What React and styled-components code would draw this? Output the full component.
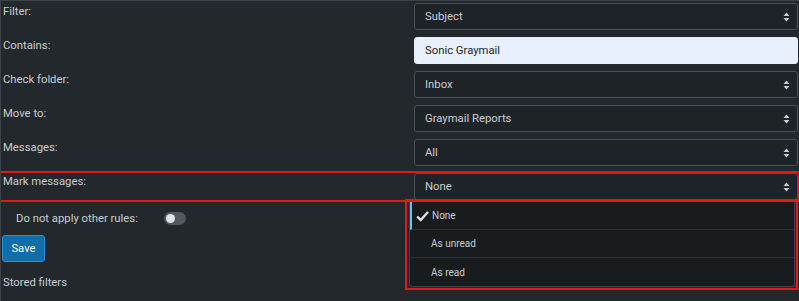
import React from "react";
import styled, { createGlobalStyle } from "styled-components";

const GlobalStyle = createGlobalStyle`
  body {
    margin: 0;
    background: #22282c;
    font-family: Roboto, "Liberation Sans", sans-serif;
    font-size: 11px;
    color: #c9cdd1;
  }
`;

const Panel = styled.div`
  position: relative;
  width: 799px;
  height: 301px;
  box-sizing: border-box;
  border-top: 1px solid #3b4248;
  border-left: 1px solid #3b4248;
  padding-top: 2px;
  overflow: hidden;
`;

const Row = styled.div`
  position: relative;
  display: grid;
  grid-template-columns: 411px 1fr;
  height: 27px;
  margin: 0 1px 7px 0;
  padding-left: 2px;
  ${({ $marked }) =>
    $marked &&
    `
    outline: 2px solid #e0191e;
    outline-offset: 0;
  `}
`;

const Label = styled.label`
  padding-top: 1px;
  font-size: 11.3px;
  line-height: 15px;
  color: #c9cdd1;
`;

const Field = styled.div`
  display: flex;
  align-items: center;
  justify-content: space-between;
  box-sizing: border-box;
  height: 27px;
  padding: 0 7px 0 10px;
  border: 1px solid ${({ $light }) => ($light ? "#e8f0fe" : "#495056")};
  border-radius: 3px;
  background: ${({ $light }) => ($light ? "#e8f0fe" : "#1e2327")};
  color: ${({ $light }) => ($light ? "#1f2326" : "#c9cdd1")};
  font-size: 11.3px;
`;

const Arrows = () => (
  <svg width="7" height="10" viewBox="0 0 7 10">
    <path d="M3.5 0.5 L6.5 4 H0.5 Z M3.5 9.5 L6.5 6 H0.5 Z" fill="#c9cdd1" />
  </svg>
);

const MenuFrame = styled.div`
  position: absolute;
  left: 404px;
  top: 198px;
  width: 393px;
  height: 91px;
  border: 2px solid #e0191e;
  box-sizing: border-box;
  padding: 1px 1px 1px 2px;
`;

const Menu = styled.ul`
  list-style: none;
  margin: 0;
  padding: 0;
  height: 100%;
  box-sizing: border-box;
  background: #181c1f;
  border: 1px solid #3a4147;
  border-top: none;
  border-radius: 0 0 3px 3px;
`;

const Item = styled.li`
  display: flex;
  align-items: center;
  height: 28px;
  box-sizing: border-box;
  padding-left: ${({ $selected }) => ($selected ? "4px" : "19px")};
  border-left: 2px solid ${({ $selected }) => ($selected ? "#6fbfe6" : "transparent")};
  border-bottom: 1px solid #2a3034;
  font-size: 10px;
  color: #c9cdd1;
  &:last-child {
    border-bottom: none;
  }
  svg {
    margin-right: 3px;
  }
`;

const Check = () => (
  <svg width="13" height="12" viewBox="0 0 13 12">
    <path d="M1.2 6.5 L4.7 10 L12 2" stroke="#dfe3e6" strokeWidth="2.4" fill="none" />
  </svg>
);

const ToggleRow = styled.div`
  display: flex;
  align-items: center;
  height: 22px;
  padding-left: 15px;
  font-size: 11.3px;
`;

const ToggleLabel = styled.span`
  width: 148px;
`;

const Track = styled.span`
  position: relative;
  width: 22px;
  height: 13px;
  border-radius: 7px;
  background: #51585e;
  &::after {
    content: "";
    position: absolute;
    left: 2px;
    top: 2px;
    width: 9px;
    height: 9px;
    border-radius: 50%;
    background: #e1e4e7;
  }
`;

const SaveButton = styled.button`
  display: block;
  margin: 6px 0 0 1px;
  width: 43px;
  height: 27px;
  border: 1px solid #2b8fd0;
  border-radius: 3px;
  background: #0f6ea8;
  color: #f2f5f8;
  font-family: Roboto, "Liberation Sans", sans-serif;
  font-size: 11.3px;
  padding: 0;
`;

const Section = styled.div`
  margin-top: 14px;
  padding-left: 2px;
  font-size: 11.3px;
`;

const rows = [
  { label: "Filter:", value: "Subject" },
  { label: "Contains:", value: "Sonic Graymail", light: true },
  { label: "Check folder:", value: "Inbox" },
  { label: "Move to:", value: "Graymail Reports" },
  { label: "Messages:", value: "All" },
  { label: "Mark messages:", value: "None", marked: true },
];

export default function App() {
  return (
    <>
      <GlobalStyle />
      <Panel>
        {rows.map((r) => (
          <Row key={r.label} $marked={r.marked}>
            <Label>{r.label}</Label>
            <Field $light={r.light}>
              <span>{r.value}</span>
              {!r.light && <Arrows />}
            </Field>
          </Row>
        ))}
        <ToggleRow>
          <ToggleLabel>Do not apply other rules:</ToggleLabel>
          <Track />
        </ToggleRow>
        <SaveButton>Save</SaveButton>
        <Section>Stored filters</Section>
        <MenuFrame>
          <Menu>
            <Item $selected>
              <Check />
              None
            </Item>
            <Item>As unread</Item>
            <Item>As read</Item>
          </Menu>
        </MenuFrame>
      </Panel>
    </>
  );
}
